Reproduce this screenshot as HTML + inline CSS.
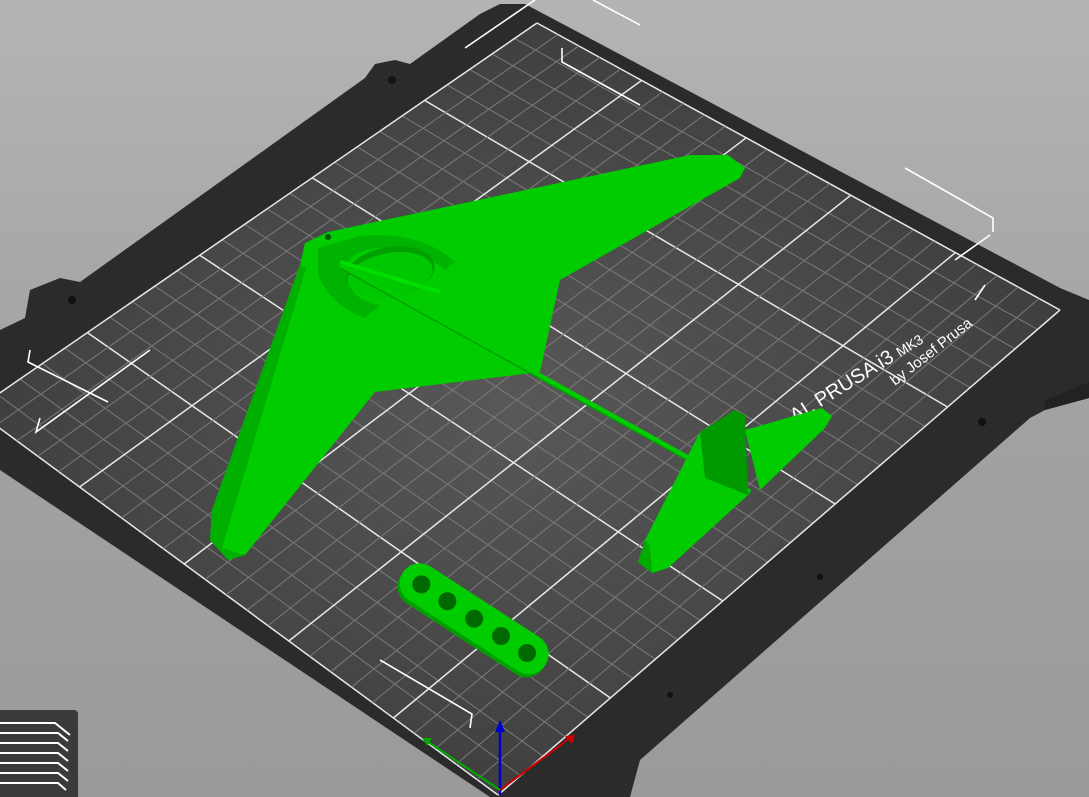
<!DOCTYPE html>
<html><head><meta charset="utf-8"><style>
html,body{margin:0;padding:0;width:1089px;height:797px;overflow:hidden;background:linear-gradient(#b4b4b4,#a2a2a2 50%,#9a9a9a);font-family:"Liberation Sans",sans-serif}
svg{position:absolute;left:0;top:0}
</style></head><body>
<svg id="s" width="1089" height="797" viewBox="0 0 1089 797">
<defs>
<radialGradient id="g" cx="0.5" cy="0.5" r="0.6"><stop offset="0" stop-color="#585858"/><stop offset="1" stop-color="#3a3a3a"/></radialGradient>
</defs>
<polygon points="480,14 500,4 525,4 1060,288 1089,300 1089,398 1045,410 1030,418 640,760 630,797 490,797 0,470 0,330 25,318 30,290 60,278 80,282 365,78 375,64 395,60 410,64" fill="#2b2b2b"/>
<polygon points="1045,400 1089,382 1089,398 1045,410" fill="#222"/>
<circle cx="72" cy="300" r="4" fill="#111"/><circle cx="392" cy="80" r="4" fill="#111"/>
<circle cx="982" cy="422" r="4" fill="#111"/><circle cx="820" cy="577" r="3" fill="#111"/><circle cx="670" cy="695" r="3" fill="#111"/>
<polygon points="537,23 1060,310 498,795 -25,410" fill="url(#g)"/>
<g id="grid"></g>
<g stroke="#fff" stroke-width="1.6" fill="none">
<polyline points="465,48 535,0"/><polyline points="593,0 640,25"/>
<polyline points="905,168 993,218 993,232"/><polyline points="955,260 990,235"/>
<polyline points="30,350 28,362 108,402"/><polyline points="40,418 36,432 150,350"/>
<polyline points="562,48 562,62 640,105"/>
<polyline points="470,728 472,714 380,660"/>
<polyline points="985,285 975,300"/>
</g>
<g fill="#fff">
<text x="0" y="0" font-size="20" transform="translate(795,423) rotate(-32)">AL PRUSA i3 <tspan font-size="14">MK3</tspan></text>
<text x="0" y="0" font-size="15" transform="translate(895,386) rotate(-38)">by Josef Prusa</text>
</g>
<polygon points="328,232 690,155 728,155 745,168 740,178 560,280 540,372 375,392 245,555 228,560 210,540 212,510 300,265 305,243" fill="#00cc00"/>
<polygon points="212,510 300,265 306,268 222,548 245,555 228,560 210,540" fill="#00b000"/>
<path d="M318,248 L360,236 Q420,230 455,262 L445,270 Q420,248 380,248 Q345,250 345,275 Q350,300 380,305 L365,318 Q330,305 318,275 Z" fill="#00b300"/>
<ellipse cx="390" cy="272" rx="45" ry="25" fill="#00a000" transform="rotate(-10 390 272)"/>
<ellipse cx="390" cy="275" rx="43" ry="22" fill="#00c800" transform="rotate(-10 390 275)"/>
<path d="M340,262 L440,292" stroke="#00e000" stroke-width="4"/>
<circle cx="328" cy="237" r="3" fill="#005500"/>
<path d="M340,265 L750,492" stroke="#00cc00" stroke-width="5"/>
<path d="M340,268 L750,495" stroke="#00a000" stroke-width="1.5"/>
<polygon points="745,430 822,408 832,416 825,428 760,490" fill="#00cc00"/>
<polygon points="700,432 745,445 748,495 668,568 652,573 638,562 645,540" fill="#00cc00"/>
<polygon points="700,432 735,410 745,415 748,495 705,478" fill="#009a00"/>
<polygon points="638,562 645,540 650,545 652,573" fill="#00aa00"/>
<g transform="translate(472,622) rotate(33)">
<rect x="-85" y="-20" width="170" height="40" rx="20" fill="#00a000"/>
<rect x="-85" y="-24" width="170" height="40" rx="20" fill="#00cc00"/>
<g fill="#006a00"><circle cx="-63" cy="-4" r="9"/><circle cx="-32" cy="-4" r="9"/><circle cx="0" cy="-4" r="9"/><circle cx="32" cy="-4" r="9"/><circle cx="63" cy="-4" r="9"/></g>
</g>
<path d="M500,795 L500,730" stroke="#0000cc" stroke-width="2.5"/><polygon points="495,732 505,732 500,720" fill="#0000cc"/>
<path d="M500,790 L570,738" stroke="#cc0000" stroke-width="2"/><polygon points="565,736 575,735 572,744" fill="#cc0000"/>
<path d="M500,790 L428,742" stroke="#00aa00" stroke-width="2"/><polygon points="432,738 422,738 427,746" fill="#00aa00"/>
<rect x="-5" y="710" width="83" height="95" rx="4" fill="#3a3a3a"/>
<g stroke="#fff" stroke-width="2" fill="none">
<path d="M0,723 L55,723 L70,735"/><path d="M0,733 L58,733 L68,741"/><path d="M0,743 L58,743 L68,751"/><path d="M0,753 L58,753 L68,761"/><path d="M0,763 L58,763 L68,771"/><path d="M0,773 L58,773 L68,781"/><path d="M0,783 L58,783 L66,790"/>
</g>
</svg>
<script>
(function(){
var T=[537,23],R=[1060,310],B=[498,795],L=[-25,410];
function lerp(a,b,t){return [a[0]+(b[0]-a[0])*t,a[1]+(b[1]-a[1])*t];}
var g=document.getElementById('grid'),h='';
var n1=25,n2=25;
for(var i=0;i<=n1;i++){var t=i/n1;var p=lerp(L,T,t),q=lerp(B,R,t);var maj=(i%5==0);
h+='<line x1="'+p[0]+'" y1="'+p[1]+'" x2="'+q[0]+'" y2="'+q[1]+'" stroke="'+(maj?'#e8e8e8':'#7a7a7a')+'" stroke-width="'+(maj?1.5:1)+'"/>';}
for(var j=0;j<=n2;j++){var t=j/n2;var p=lerp(T,R,t),q=lerp(L,B,t);var maj=(j%5==0);
h+='<line x1="'+p[0]+'" y1="'+p[1]+'" x2="'+q[0]+'" y2="'+q[1]+'" stroke="'+(maj?'#e8e8e8':'#7a7a7a')+'" stroke-width="'+(maj?1.5:1)+'"/>';}
g.innerHTML=h;
})();
</script>
</body></html>
